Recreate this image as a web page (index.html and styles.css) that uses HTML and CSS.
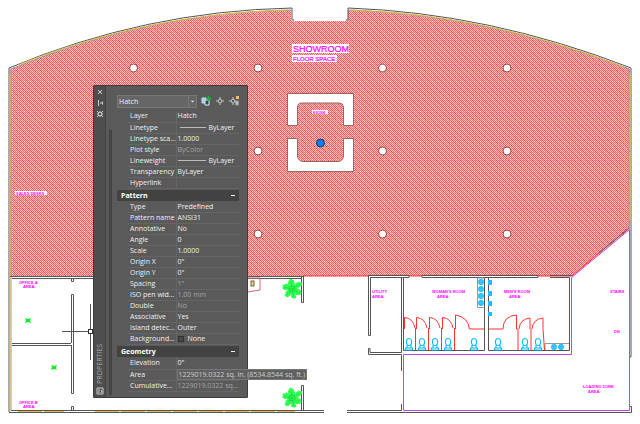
FILE: index.html
```html
<!DOCTYPE html>
<html lang="en">
<head>
    <meta charset="UTF-8">
    <meta name="viewport" content="width=device-width, initial-scale=1.0">
    <title>Showroom - Floor Plan</title>
    <link rel="stylesheet" href="styles.css">
</head>
<body>
<main class="drawing">
    <svg class="plan" viewBox="0 0 640 424" role="img" aria-label="Showroom floor plan">
        <defs>
            <pattern id="hatch" width="6" height="6" patternUnits="userSpaceOnUse">
                <rect width="6" height="6" fill="#ffb9b9"/>
                <path d="M0 0h1v1h-1zM2 0h1v1h-1zM4 0h1v1h-1zM1 1h1v1h-1zM3 1h1v1h-1zM5 1h1v1h-1zM0 2h1v1h-1zM2 2h1v1h-1zM4 2h1v1h-1zM1 3h1v1h-1zM3 3h1v1h-1zM5 3h1v1h-1zM0 4h1v1h-1zM2 4h1v1h-1zM4 4h1v1h-1zM1 5h1v1h-1zM3 5h1v1h-1zM5 5h1v1h-1z" fill="#ff6666"/>
                <path d="M1 1h1v1h-1zM2 2h1v1h-1zM4 4h1v1h-1zM5 5h1v1h-1z" fill="#f54444"/>
                <path d="M3 0h1v1h-1zM0 3h1v1h-1z" fill="#ffd8d8"/>
            </pattern>
            <g id="plant">
                <path d="M-1-3L-4-6L-2-10L1-9L3-4L6-7L10-6L9-3L5-1L9 2L9 5L5 6L3 4L4 9L0 9L-1 5L-4 8L-7 7L-6 3L-4 1L-9 0L-9-4L-5-5Z" fill="#3f5" stroke="#2f4" stroke-dasharray="2 1"/>
                <path d="M0 0L-1-8M0 0L8-5M0 0L7 4M0 0L2 8M0 0L-5 6M0 0L-8-2" stroke="#1c3" stroke-width=".6"/>
                <circle r="3" fill="none" stroke="#1c3" stroke-width=".7"/>
            </g>
            <g id="toilet" class="fixture">
                <ellipse cy="-6" rx="2.6" ry="3.5"/>
                <path d="M-2-3L-2 0M2-3L2 0M-3.500 0H3.500V2H-3.500Z"/>
            </g>
            <g id="sink" class="fixture">
                <circle r="2.300" fill="#5cf"/>
                <path d="M-1 0H1"/>
            </g>
            <path id="door" d="M.5 12V.5Q9 1 11 11" class="red"/>
        </defs>

        <!-- showroom floor -->
        <path d="M10 276V69Q145 13 291 10V21H348V10Q490 15 630 69V229L572 276Z" fill="url(#hatch)"/>
        <path class="wall" d="M9 412V68Q145 11 292 8V20H294M346 20H348V8Q490 13 631 68V357H629"/>
        <path class="wall thin" d="M11 411V69Q145 13 291 10M349 10Q490 15 629 69V229"/>
        <path class="window" d="M10 74V411M18 65Q145 14 288 10M352 10Q490 15 624 67M630 74V220"/>
        <path class="red" d="M303 276H369M409 276H422M538 276H572L600 252"/>
        <path class="wall" d="M600 252L629 228"/>

        <!-- columns -->
        <g class="column">
            <circle cx="133.500" cy="68" r="4"/><circle cx="258" cy="68" r="4"/>
            <circle cx="382.500" cy="68" r="4"/><circle cx="507" cy="68" r="4"/>
            <circle cx="258" cy="151" r="4"/><circle cx="382.500" cy="151" r="4"/><circle cx="507" cy="151" r="4"/>
            <circle cx="258" cy="234" r="4"/><circle cx="382.500" cy="234" r="4"/><circle cx="507" cy="234" r="4"/>
        </g>

        <!-- kiosk -->
        <path class="counter" d="M287.500 125.500V93.500H353.500V125.500H343.500V107Q343 103 339 103H302Q297 103 297.500 108V125.500ZM287.500 138.500V171.500H353.500V138.500H343.500V156Q343 161 338 161.500H303Q298 161 297.500 156V138.500Z"/>
        <circle cx="320.500" cy="143" r="4" fill="#0a80f5" stroke="#235"/>
        <rect x="292" y="44" width="57" height="9" fill="#fff"/>
        <rect x="292" y="55" width="45" height="7" fill="#fff"/>
        <rect x="312" y="110" width="16" height="4" fill="#fff"/>
        <rect x="15" y="191" width="32" height="4" fill="#fff"/>

        <!-- offices -->
        <path class="wall" d="M10 276.500H303M12 278.500H302M12 343.500H71M12 345.500H71M9 412.500H324M11 410.500H324M71.500 278V281.500H73.500V278M71.500 343V294.500H73.500V393.500H71.500V345M71.500 410V406.500H73.500V410"/>
        <path class="wall" d="M301.500 277V302.500H303.500V276M301.500 410V385.500H303.500V410"/>
        <path class="window" d="M18 411.500H64M95 411.500H295"/>
        <path class="red thin" d="M248 278H260V290L248 292"/>
        <rect x="251" y="281" width="3" height="5" fill="#dca" stroke="#763"/>

        <!-- utility and wash rooms -->
        <path class="wall" d="M409 275.500H368.500V335.500H370.500V277.500H409V275.500M422 275.500H538V277.500H422V275.500M550 275.500H571M550 277.500H569.500V350.500H488.500V278M484.500 278V350.500H403.500V278M401.500 278V352.500H370V348.500H368.500V354.500H401.500V371M401.500 404V410.500H347M347 412.500H631.500V406.500H629"/>
        <path class="wall thin" d="M484.500 278H477.500V307.500H484.500M545 350V343.500H569"/>
        <path class="purple" d="M403.500 410.500V354.500H571.500V277.500L629.500 229.500V410.500Z"/>
        <g>
            <use href="#door" x="404" y="317"/><use href="#door" x="416" y="317"/>
            <use href="#door" x="429" y="317"/><use href="#door" x="442" y="317"/>
            <path class="red" d="M404.500 329V318M415.500 328V350M428.500 328V350M441.500 328V350M454.500 328V350M455.500 329V315Q468 317 469.500 329H484M489 329H503Q503 316 516.500 315V329H518M518 329V350M519 329Q520 319 530 318V329M531 329V350M532 329Q533 319 543 318V329L544.500 350"/>
        </g>
        <use href="#toilet" x="409" y="348"/><use href="#toilet" x="422" y="348"/>
        <use href="#toilet" x="435" y="348"/><use href="#toilet" x="448" y="348"/>
        <use href="#toilet" x="474" y="348"/><use href="#toilet" x="498" y="348"/>
        <use href="#toilet" x="525" y="348"/><use href="#toilet" x="538" y="348"/>
        <use href="#sink" x="481" y="282"/><use href="#sink" x="481" y="289"/>
        <use href="#sink" x="481" y="296"/><use href="#sink" x="481" y="303"/>
        <use href="#sink" x="554" y="347"/><use href="#sink" x="561" y="347"/>
        <path d="M488 280H492V285H488ZM488 291H492V296H488ZM488 301H492V306H488ZM488 312H492V316H488Z" fill="#2bf"/>

        <!-- plants -->
        <use href="#plant" x="292" y="289"/>
        <use href="#plant" x="292" y="398"/>
        <path d="M25 318L28 319L31 318L30 321L31 323L28 322L25 323L26 320ZM51 365L54 366L57 365L56 368L57 370L54 369L51 370L52 367Z" fill="#1e2"/>

        <!-- room labels -->
        <g class="labels">
            <text x="293" y="52" class="title">SHOWROOM</text>
            <text x="293" y="61" class="subtitle">FLOOR SPACE:</text>
            <text x="313" y="114">KIOSK</text>
            <text x="16" y="195">SALES DESKS</text>
            <text x="19" y="284">OFFICE A</text>
            <text x="23" y="288">AREA:</text>
            <text x="19" y="404">OFFICE B</text>
            <text x="23" y="408">AREA:</text>
            <text x="372" y="293">UTILITY</text>
            <text x="372" y="298">AREA:</text>
            <text x="432" y="293">WOMAN'S ROOM</text>
            <text x="437" y="298">AREA:</text>
            <text x="504" y="293">MEN'S ROOM</text>
            <text x="509" y="298">AREA:</text>
            <text x="610" y="293">STAIRS</text>
            <text x="614" y="333">DN</text>
            <text x="583" y="388">LOADING ZONE</text>
            <text x="588" y="393">AREA:</text>
        </g>

        <!-- crosshair -->
        <path class="wall" d="M62 331.500H88M90.500 304V329M90.500 334V360"/>
        <rect x="88.500" y="329.500" width="4" height="4" fill="#fff" stroke="#333"/>
    </svg>

    <section class="palette" aria-label="Properties">
        <div class="palette-bar">
            <button type="button" aria-label="Close"><svg viewBox="0 0 8 8"><path d="M2 2L6 6M6 2L2 6"/></svg></button>
            <button type="button" aria-label="Auto-hide"><svg viewBox="0 0 8 8"><path d="M2.500 1V7M4 4H6M6.500 2.500V5.500"/></svg></button>
            <button type="button" aria-label="Settings"><svg viewBox="0 0 8 8"><circle cx="4" cy="4" r="1.800"/><path d="M4 1V2M4 6V7M1 4H2M6 4H7M1 1L3 3M5 5L7 7M7 1L5 3M3 5L1 7"/></svg></button>
            <h2>PROPERTIES</h2>
            <svg class="bar-icon" viewBox="0 0 8 8"><path d="M1 1H7V7H1ZM2 3H4M2 5H4M5 3L6 4L5 6"/></svg>
        </div>
        <div class="scroll"><span></span></div>
        <div class="palette-body">
            <div class="tools">
                <div class="select-box">
                    <select aria-label="Object type"><option>Hatch</option></select>
                    <svg viewBox="0 0 8 12"><path d="M2 5H6L4 7Z"/></svg>
                </div>
                <button type="button" aria-label="Toggle PICKADD"><svg viewBox="0 0 10 10"><path d="M1 2H5V7H1Z" fill="#9cd" stroke="#cde"/><path d="M4 4H8V9H4Z" fill="#345" stroke="#def"/><path d="M7.500 0V5M5 2.500H10" stroke="#1b3" stroke-width="1.500"/></svg></button>
                <button type="button" aria-label="Select objects"><svg viewBox="0 0 10 10"><path d="M5 1V4M5 6V9M1 5H4M6 5H9"/><path d="M3.500 3.500H6.500V6.500H3.500Z" stroke-width=".6"/></svg></button>
                <button type="button" aria-label="Quick select"><svg viewBox="0 0 10 10"><path d="M4 1V4M4 6V9M0 5H3M5 5H7"/><path d="M2.500 3.500H5.500V6.500H2.500Z" stroke-width=".6"/><path d="M7 0H10V3H7Z" fill="#fb5" stroke="none"/><path d="M6.500 5H9.500V9H6.500Z" fill="#bbb" stroke="#999"/></svg></button>
            </div>
            <table>
                <tbody>
                    <tr><th scope="row">Layer</th><td>Hatch</td></tr>
                    <tr><th scope="row">Linetype</th><td><span class="line short"></span>ByLayer</td></tr>
                    <tr><th scope="row">Linetype sca...</th><td>1.0000</td></tr>
                    <tr><th scope="row">Plot style</th><td class="off">ByColor</td></tr>
                    <tr><th scope="row">Lineweight</th><td><span class="line"></span>ByLayer</td></tr>
                    <tr><th scope="row">Transparency</th><td>ByLayer</td></tr>
                    <tr><th scope="row">Hyperlink</th><td></td></tr>
                </tbody>
            </table>
            <h3>Pattern <button type="button" aria-label="Collapse Pattern"></button></h3>
            <table>
                <tbody>
                    <tr><th scope="row">Type</th><td>Predefined</td></tr>
                    <tr><th scope="row">Pattern name</th><td>ANSI31</td></tr>
                    <tr><th scope="row">Annotative</th><td>No</td></tr>
                    <tr><th scope="row">Angle</th><td>0</td></tr>
                    <tr><th scope="row">Scale</th><td>1.0000</td></tr>
                    <tr><th scope="row">Origin X</th><td>0"</td></tr>
                    <tr><th scope="row">Origin Y</th><td>0"</td></tr>
                    <tr><th scope="row">Spacing</th><td class="off">1"</td></tr>
                    <tr><th scope="row">ISO pen wid...</th><td class="off">1.00 mm</td></tr>
                    <tr><th scope="row">Double</th><td class="off">No</td></tr>
                    <tr><th scope="row">Associative</th><td>Yes</td></tr>
                    <tr><th scope="row">Island detec...</th><td>Outer</td></tr>
                    <tr><th scope="row">Background...</th><td><span class="swatch"></span>None</td></tr>
                </tbody>
            </table>
            <h3>Geometry <button type="button" aria-label="Collapse Geometry"></button></h3>
            <table>
                <tbody>
                    <tr><th scope="row">Elevation</th><td>0"</td></tr>
                    <tr><th scope="row">Area</th><td class="tip-cell"><span class="tip" role="tooltip">1229019.0322 sq. in. (8534.8544 sq. ft.)</span></td></tr>
                    <tr><th scope="row">Cumulative...</th><td class="off">1229019.0322 sq...</td></tr>
                </tbody>
            </table>
        </div>
    </section>
</main>
</body>
</html>
```
FILE: styles.css
```css
* {
    box-sizing: border-box;
}

body {
    margin: 0;
    background: #fff;
    font-family: "Open Sans", "Noto Sans", sans-serif;
    font-size: 7px;
}

.drawing {
    position: relative;
}

.plan {
    display: block;
    width: 100%;
}

/* floor plan */
.wall {
    fill: none;
    stroke: #555;
}

.thin {
    stroke: #999;
}

.window {
    fill: none;
    stroke: #e5b945;
    stroke-dasharray: 24 2;
}

.red {
    fill: none;
    stroke: #f33;
}

.red.thin {
    stroke: #d66;
}

.purple {
    fill: none;
    stroke: #b848ee;
}

.column circle {
    fill: #fff;
    stroke: #944;
}

.counter {
    fill: #fff;
    stroke: #966;
}

.fixture {
    fill: none;
    stroke: #1bf;
    stroke-width: 1.2;
}

.labels {
    fill: #f0f;
    font-family: "Liberation Sans", Arial, sans-serif;
    font-size: 4px;
    font-weight: bold;
}

.labels .title {
    font-size: 9px;
    font-weight: normal;
    stroke: #f0f;
    stroke-width: .2;
}

.labels .subtitle {
    font-size: 6px;
    font-weight: normal;
    stroke: #f0f;
    stroke-width: .2;
}

/* properties palette */
.palette {
    position: absolute;
    top: 85px;
    left: 93px;
    display: flex;
    width: 155px;
    background: #5a5a5a;
    border: 1px solid #3c3c3c;
    border-radius: 1px;
    color: #f0f0f0;
}

.palette svg {
    fill: none;
    stroke: #ccc;
    stroke-width: 1;
}

.palette button {
    padding: 0;
    border: 0;
    background: none;
}

.palette-bar {
    display: flex;
    flex-direction: column;
    align-items: center;
    gap: 3px;
    width: 12px;
    padding: 2px 0;
    background: #4e4e4e;
    border-right: 1px solid #434343;
}

.palette-bar button,
.palette-bar svg {
    display: block;
    width: 8px;
    height: 8px;
}

.palette-bar h2 {
    margin: auto 0 0;
    color: #aaa;
    font-size: 7px;
    font-weight: normal;
    line-height: 10px;
    writing-mode: vertical-rl;
    transform: rotate(180deg);
}

.scroll {
    width: 10px;
    padding: 44px 3px 2px;
}

.scroll span {
    display: block;
    width: 3px;
    height: 100%;
    background: #444;
}

.palette-body {
    flex: 1;
    padding: 8px 8px 5px 1px;
}

.tools {
    display: flex;
    align-items: center;
    gap: 4px;
    height: 14px;
    margin-bottom: 3px;
}

.select-box {
    display: flex;
    width: 80px;
    height: 13px;
    border: 1px solid #777;
    background: #666;
}

.select-box select {
    flex: 1;
    padding: 0 1px;
    border: 0;
    appearance: none;
    background: none;
    color: #f0f0f0;
    font: inherit;
}

.select-box svg {
    width: 8px;
    border-left: 1px solid #777;
    fill: #eee;
    stroke: none;
}

.tools button,
.tools button svg {
    display: block;
    width: 10px;
    height: 10px;
}

table {
    width: 112px;
    margin-left: 10px;
    border-collapse: collapse;
    table-layout: fixed;
}

tr {
    height: 11px;
}

th,
td {
    height: 11px;
    padding: 0 0 0 1px;
    border-bottom: 1px solid #656565;
    font-weight: normal;
    line-height: 10px;
    text-align: left;
    white-space: nowrap;
}

th {
    width: 49px;
    padding-left: 3px;
    border-right: 1px solid #656565;
}

.off {
    color: #a5a5a5;
}

h3 {
    display: flex;
    justify-content: space-between;
    align-items: center;
    height: 11px;
    margin: 1px 0;
    padding: 0 4px;
    background: #424242;
    color: #fff;
    font-size: 7px;
    line-height: 11px;
}

.palette h3 button {
    width: 4px;
    height: 1px;
    background: #eee;
}

.line {
    display: inline-block;
    width: 28px;
    height: 1px;
    margin-right: 3px;
    background: #bbb;
    vertical-align: middle;
}

.line.short {
    width: 26px;
    margin-left: 2px;
}

.swatch {
    display: inline-block;
    width: 6px;
    height: 6px;
    margin-right: 4px;
    background: #484848;
    border: 1px solid #303030;
    vertical-align: middle;
}

.tip-cell {
    position: relative;
}

.tip {
    position: absolute;
    top: -1px;
    left: 0;
    z-index: 1;
    padding: 0 1px;
    background: #606060;
    border: 1px solid #777;
    color: #ccc;
    line-height: 9px;
}
```
